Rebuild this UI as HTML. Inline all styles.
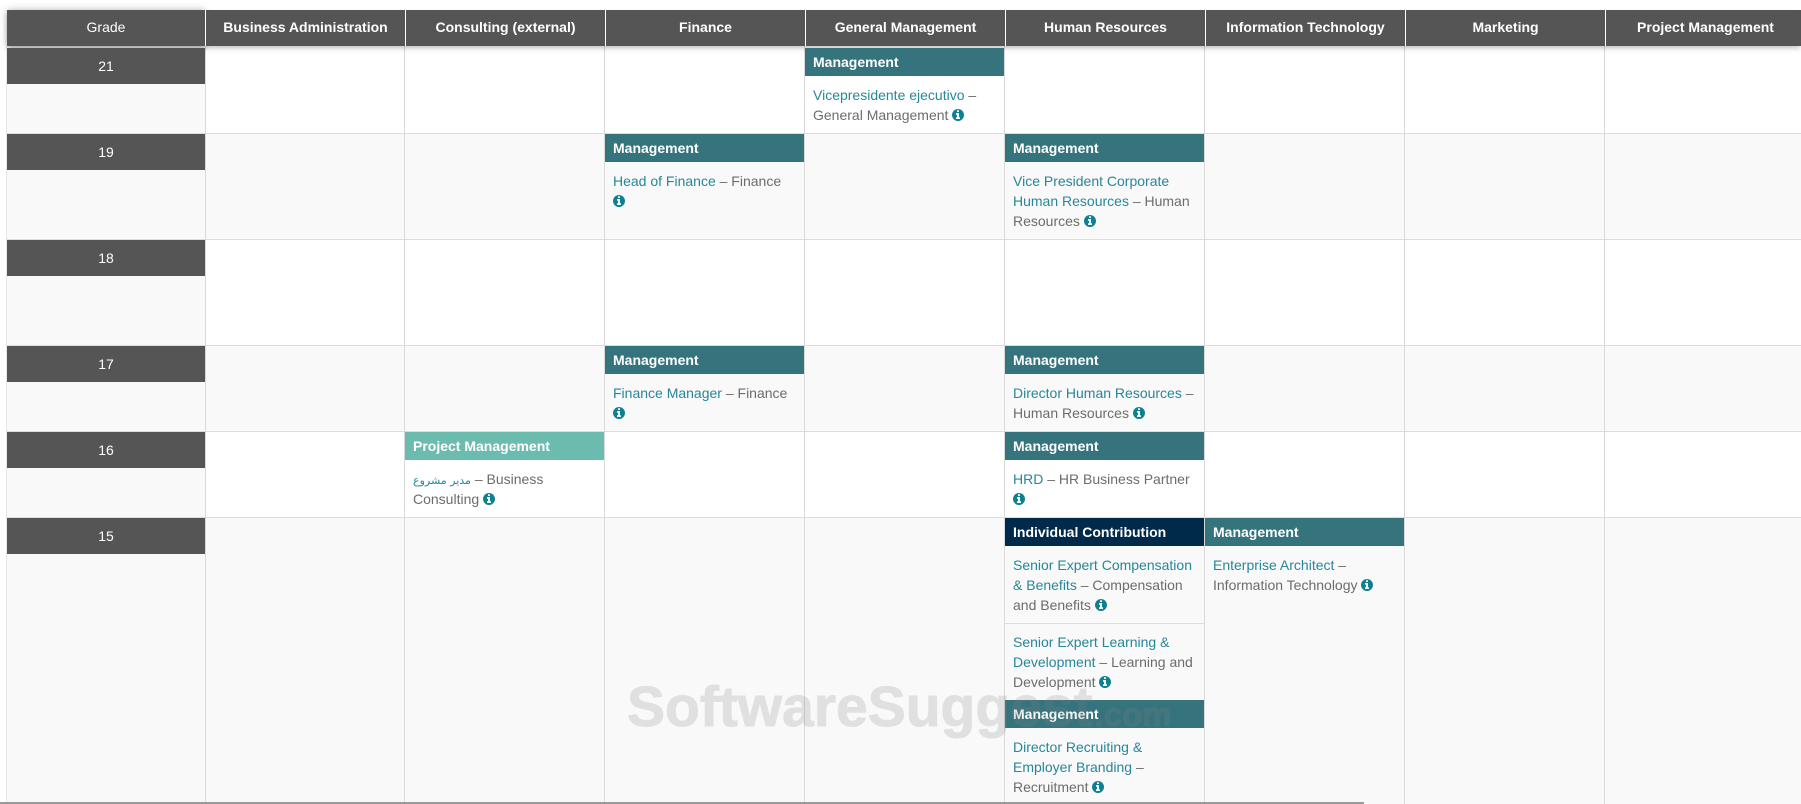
<!DOCTYPE html>
<html lang="en">
<head>
<meta charset="utf-8">
<title>Career Grades</title>
<style>
html,body{margin:0;padding:0;width:1801px;height:804px;overflow:hidden;background:#fff}
body{position:relative;font-family:"Liberation Sans",Arial,sans-serif;font-size:14px;line-height:20px;color:#6c6c6c}
div{box-sizing:border-box}
.row,.vl,.hl,.g,.b,.t,.th,.gc,.wm,.sb,.hdr,.gs{position:absolute}
.row{left:7px;width:1794px}
.alt{background:#f9f9f9}
.gc{left:7px;width:198px;top:46px;height:758px;background:#f9f9f9}
.hl{left:6px;width:1795px;height:1px;background:#ddd}
.vl{top:46px;bottom:0;width:1px;background:#d9d9d9}
.hdr{left:7px;top:10px;width:1794px;height:36px;background:#555;box-shadow:0 3px 5px -1px rgba(0,0,0,.25)}
.gs{left:7px;top:10px;width:198px;height:36px;box-shadow:0 0 7px rgba(0,0,0,.28)}
.th{top:10px;height:36px;text-align:center;color:#fff;font-weight:bold;border-left:1px solid #fff;line-height:35px;width:200px}
.th.first{left:7px;width:198px;border-left:0;font-weight:normal}
.g{left:7px;width:198px;height:36px;background:#555;color:#fff;text-align:center;line-height:20px;padding-top:8px}
.b{width:199px;height:28px;line-height:28px;padding-left:8px;color:#fff;font-weight:bold;background:#36747d}
.b.pm{background:#6bbcae}
.b.ic{background:#002a4a}
.t{width:199px;padding-left:8px;white-space:nowrap}
.t a{color:#27869a;text-decoration:none}
svg.i{width:12px;height:12px;vertical-align:-1px;fill:#0e8094}
.t a.ar{font-family:"DejaVu Sans","Noto Sans CJK SC",sans-serif;font-size:11px;line-height:0}
.wm{left:627px;top:672px;z-index:5;white-space:nowrap;color:#808080;opacity:.2;font-weight:bold;font-size:57px;line-height:70px;pointer-events:none;-webkit-text-stroke:1px #808080}
.wm span{font-size:33px;margin-left:2px}
.sb{left:0;bottom:0;width:1364px;height:2px;background:#999;z-index:6}
</style>
</head>
<body>
<svg width="0" height="0" style="position:absolute"><defs><symbol id="inf" viewBox="128 128 1536 1536"><path d="M1152 1376v-160q0-14-9-23t-23-9h-96v-512q0-14-9-23t-23-9h-320q-14 0-23 9t-9 23v160q0 14 9 23t23 9h96v320h-96q-14 0-23 9t-9 23v160q0 14 9 23t23 9h448q14 0 23-9t9-23zm-128-896v-160q0-14-9-23t-23-9h-192q-14 0-23 9t-9 23v160q0 14 9 23t23 9h192q14 0 23-9t9-23zm640 416q0 209-103 385.5t-279.5 279.5-385.5 103-385.5-103-279.5-279.5-103-385.5 103-385.5 279.5-279.5 385.5-103 385.5 103 279.5 279.5 103 385.5z"/></symbol></defs></svg>

<!-- row stripes -->
<div class="row alt" style="top:133px;height:106px"></div>
<div class="row alt" style="top:345px;height:86px"></div>
<div class="row alt" style="top:517px;height:287px"></div>
<div class="gc"></div>

<!-- grid lines -->
<div class="hl" style="top:133px"></div>
<div class="hl" style="top:239px"></div>
<div class="hl" style="top:345px"></div>
<div class="hl" style="top:431px"></div>
<div class="hl" style="top:517px"></div>
<div class="vl" style="left:6px;background:#e6e6e6"></div>
<div class="vl" style="left:205px"></div>
<div class="vl" style="left:404px"></div>
<div class="vl" style="left:604px"></div>
<div class="vl" style="left:804px"></div>
<div class="vl" style="left:1004px"></div>
<div class="vl" style="left:1204px"></div>
<div class="vl" style="left:1404px"></div>
<div class="vl" style="left:1604px"></div>

<!-- header -->
<div class="gs"></div>
<div class="hdr"></div>
<div class="th first">Grade</div>
<div class="th" style="left:205px">Business Administration</div>
<div class="th" style="left:405px">Consulting (external)</div>
<div class="th" style="left:605px">Finance</div>
<div class="th" style="left:805px">General Management</div>
<div class="th" style="left:1005px">Human Resources</div>
<div class="th" style="left:1205px">Information Technology</div>
<div class="th" style="left:1405px">Marketing</div>
<div class="th" style="left:1605px">Project Management</div>

<!-- grades -->
<div class="g" style="top:48px">21</div>
<div class="g" style="top:134px">19</div>
<div class="g" style="top:240px">18</div>
<div class="g" style="top:346px">17</div>
<div class="g" style="top:432px">16</div>
<div class="g" style="top:518px">15</div>

<!-- grade 21 -->
<div class="b" style="left:805px;top:48px">Management</div>
<div class="t" style="left:805px;top:85px"><a href="#">Vicepresidente ejecutivo</a> –<br>General Management <svg class="i"><use href="#inf"/></svg></div>

<!-- grade 19 -->
<div class="b" style="left:605px;top:134px">Management</div>
<div class="t" style="left:605px;top:171px"><a href="#">Head of Finance</a> – Finance<br><svg class="i"><use href="#inf"/></svg></div>
<div class="b" style="left:1005px;top:134px">Management</div>
<div class="t" style="left:1005px;top:171px"><a href="#">Vice President Corporate<br>Human Resources</a> – Human<br>Resources <svg class="i"><use href="#inf"/></svg></div>

<!-- grade 17 -->
<div class="b" style="left:605px;top:346px">Management</div>
<div class="t" style="left:605px;top:383px"><a href="#">Finance Manager</a> – Finance<br><svg class="i"><use href="#inf"/></svg></div>
<div class="b" style="left:1005px;top:346px">Management</div>
<div class="t" style="left:1005px;top:383px"><a href="#">Director Human Resources</a> –<br>Human Resources <svg class="i"><use href="#inf"/></svg></div>

<!-- grade 16 -->
<div class="b pm" style="left:405px;top:432px">Project Management</div>
<div class="t" style="left:405px;top:469px"><a href="#" class="ar">مدير مشروع</a> – Business<br>Consulting <svg class="i"><use href="#inf"/></svg></div>
<div class="b" style="left:1005px;top:432px">Management</div>
<div class="t" style="left:1005px;top:469px"><a href="#">HRD</a> – HR Business Partner<br><svg class="i"><use href="#inf"/></svg></div>

<!-- grade 15 -->
<div class="b ic" style="left:1005px;top:518px">Individual Contribution</div>
<div class="t" style="left:1005px;top:555px"><a href="#">Senior Expert Compensation<br>&amp; Benefits</a> – Compensation<br>and Benefits <svg class="i"><use href="#inf"/></svg></div>
<div class="hl" style="left:1005px;width:199px;top:623px"></div>
<div class="t" style="left:1005px;top:632px"><a href="#">Senior Expert Learning &amp;<br>Development</a> – Learning and<br>Development <svg class="i"><use href="#inf"/></svg></div>
<div class="b" style="left:1005px;top:700px">Management</div>
<div class="t" style="left:1005px;top:737px"><a href="#">Director Recruiting &amp;<br>Employer Branding</a> –<br>Recruitment <svg class="i"><use href="#inf"/></svg></div>
<div class="b" style="left:1205px;top:518px">Management</div>
<div class="t" style="left:1205px;top:555px"><a href="#">Enterprise Architect</a> –<br>Information Technology <svg class="i"><use href="#inf"/></svg></div>

<div class="wm">SoftwareSuggest<span>.com</span></div>
<div class="sb"></div>
</body>
</html>
